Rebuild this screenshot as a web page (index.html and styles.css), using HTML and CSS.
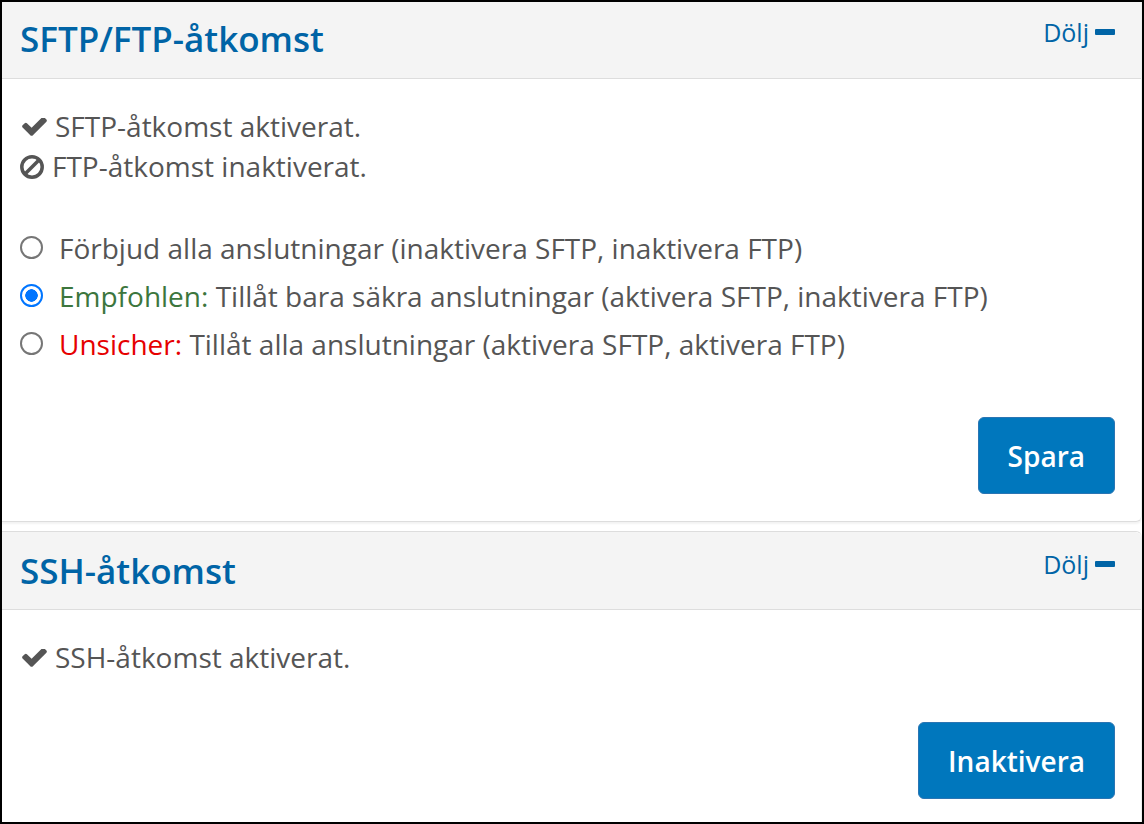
FILE: index.html
```html
<!doctype html>
<html lang="sv">
    <head>
        <meta charset="utf-8">
        <title>SFTP/FTP-åtkomst</title>
        <link rel="stylesheet" href="styles.css">
    </head>
    <body>
        <main class="page">
            <section class="panel panel-first">
                <header class="panel-header">
                    <h2 class="panel-title">SFTP/FTP-åtkomst</h2>
                    <a href="#sftp-body" class="toggle">Dölj
                        <svg class="icon-minus" viewBox="0 0 20 6" aria-hidden="true"><rect width="20" height="6" rx="1" /></svg>
                    </a>
                </header>
                <form class="panel-body" id="sftp-body">
                    <p class="state">
                        <svg class="icon-check" viewBox="121 403 1550 1190" aria-hidden="true"><path d="M1671 566q0 40-28 68l-724 724-136 136q-28 28-68 28t-68-28l-136-136-362-362q-28-28-28-68t28-68l136-136q28-28 68-28t68 28l294 295 656-657q28-28 68-28t68 28l136 136q28 28 28 68z" /></svg>
                        SFTP-åtkomst aktiverat.
                    </p>
                    <p class="state">
                        <svg class="icon-ban" viewBox="0 0 24 24" aria-hidden="true"><circle cx="12" cy="12" r="10.2" /><path d="M5 19L19 5" /></svg>
                        FTP-åtkomst inaktiverat.
                    </p>
                    <div class="options">
                        <label class="option">
                            <input type="radio" name="access" value="none">
                            <span>Förbjud alla anslutningar (inaktivera SFTP, inaktivera FTP)</span>
                        </label>
                        <label class="option">
                            <input type="radio" name="access" value="sftp" checked>
                            <span><span class="recommended">Empfohlen:</span> Tillåt bara säkra anslutningar (aktivera SFTP, inaktivera FTP)</span>
                        </label>
                        <label class="option">
                            <input type="radio" name="access" value="all">
                            <span><span class="unsafe">Unsicher:</span> Tillåt alla anslutningar (aktivera SFTP, aktivera FTP)</span>
                        </label>
                    </div>
                    <div class="actions">
                        <button type="button" class="btn">Spara</button>
                    </div>
                </form>
            </section>

            <section class="panel">
                <header class="panel-header">
                    <h2 class="panel-title">SSH-åtkomst</h2>
                    <a href="#ssh-body" class="toggle">Dölj
                        <svg class="icon-minus" viewBox="0 0 20 6" aria-hidden="true"><rect width="20" height="6" rx="1" /></svg>
                    </a>
                </header>
                <div class="panel-body" id="ssh-body">
                    <p class="state">
                        <svg class="icon-check" viewBox="121 403 1550 1190" aria-hidden="true"><path d="M1671 566q0 40-28 68l-724 724-136 136q-28 28-68 28t-68-28l-136-136-362-362q-28-28-28-68t28-68l136-136q28-28 68-28t68 28l294 295 656-657q28-28 68-28t68 28l136 136q28 28 28 68z" /></svg>
                        SSH-åtkomst aktiverat.
                    </p>
                    <div class="actions">
                        <button type="button" class="btn">Inaktivera</button>
                    </div>
                </div>
            </section>
        </main>
    </body>
</html>
```
FILE: styles.css
```css
* {
    box-sizing: border-box;
}
body {
    margin: 0;
    font-family: "Open Sans", sans-serif;
    font-size: 28px;
    line-height: 40px;
    color: #555;
    background: #fff;
}
.page {
    min-height: 100vh;
    border: 2px solid #000;
}
.panel {
    border-top: 1px solid #ddd;
    border-right: 1px solid #eee;
    border-radius: 0 6px 0 0;
}
.panel-first {
    margin-bottom: 9px;
    border-top: none;
    border-bottom: 1px solid #ddd;
    border-radius: 0 0 6px 0;
    box-shadow: 0 2px 2px rgba(0, 0, 0, 0.05);
}
.panel-header {
    display: flex;
    justify-content: space-between;
    align-items: flex-start;
    padding: 15px 26px 14px 18px;
    border-bottom: 1px solid #ddd;
    border-radius: 0 6px 0 0;
    background: #f4f4f4;
}
.panel-first .panel-header {
    padding-top: 13px;
    padding-bottom: 15px;
    border-radius: 0;
}
.panel-title {
    margin: 0;
    font-size: 35px;
    font-weight: 600;
    line-height: 48px;
    color: #0064a6;
}
.toggle {
    display: flex;
    align-items: center;
    gap: 6px;
    font-size: 25px;
    line-height: 34px;
    color: #0064a6;
    text-decoration: none;
}
.icon-minus {
    width: 20px;
    height: 6px;
    fill: #0064a6;
}
.panel-body {
    padding: 27px 26px 23px 18px;
}
.panel-first .panel-body {
    padding-bottom: 27px;
}
.state {
    display: flex;
    align-items: center;
    margin: 0;
}
.icon-check {
    width: 25px;
    height: 19px;
    margin: 2px 8px 0 2px;
    fill: #555;
}
.icon-ban {
    width: 24px;
    height: 24px;
    margin: 2px 8px 0 0;
    fill: none;
    stroke: #555;
    stroke-width: 3.5;
}
.options {
    display: grid;
    gap: 8px;
    margin-top: 42px;
}
.option {
    display: flex;
    align-items: center;
    gap: 16px;
}
.option input {
    appearance: none;
    width: 23px;
    height: 23px;
    margin: 0 0 2px;
    padding: 3px;
    border: 2px solid #767676;
    border-radius: 50%;
    background-clip: content-box;
}
.option input:checked {
    border-color: #0075ff;
    /* the fill stops at the content box, which leaves the white ring */
    background: radial-gradient(circle closest-side, #0075ff 95%, transparent) content-box;
}
.recommended {
    color: #3c763d;
}
.unsafe {
    color: #e60000;
}
.actions {
    display: flex;
    justify-content: flex-end;
    margin-top: 45px;
}
.options + .actions {
    margin-top: 53px;
}
.btn {
    padding: 18px 29px 17px;
    border: 1px solid #2a75b3;
    border-radius: 6px;
    background: #0077bd;
    color: #fff;
    font: inherit;
    font-weight: 600;
    cursor: pointer;
}
```
